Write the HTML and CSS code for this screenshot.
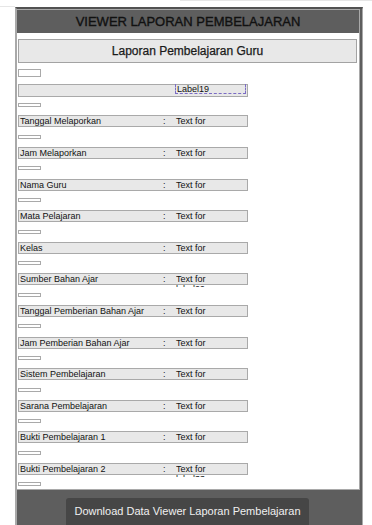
FILE: index.html
```html
<!DOCTYPE html>
<html>
<head>
<meta charset="utf-8">
<link rel="stylesheet" href="styles.css">
</head>
<body>
<div class="topline"></div>
<div class="stage">
  <div class="stub"></div>
  <div class="frame">
    <div class="header">VIEWER LAPORAN PEMBELAJARAN</div>
    <div class="content">
      <div class="title">Laporan Pembelajaran Guru</div>
      <div class="spacer big"></div>
      <div class="labelrow"><span class="label19">Label19</span></div>
      <div class="spacer first"></div>

      <div class="row"><span>Tanggal Melaporkan</span><span>:</span><span class="val">Text for</span></div>
      <div class="spacer"></div>
      <div class="row"><span>Jam Melaporkan</span><span>:</span><span class="val">Text for</span></div>
      <div class="spacer"></div>
      <div class="row"><span>Nama Guru</span><span>:</span><span class="val">Text for</span></div>
      <div class="spacer"></div>
      <div class="row"><span>Mata Pelajaran</span><span>:</span><span class="val">Text for</span></div>
      <div class="spacer"></div>
      <div class="row"><span>Kelas</span><span>:</span><span class="val">Text for</span></div>
      <div class="spacer"></div>
      <div class="row"><span>Sumber Bahan Ajar</span><span>:</span><span class="val wrap">Text for label29</span></div>
      <div class="spacer"></div>
      <div class="row"><span>Tanggal Pemberian Bahan Ajar</span><span>:</span><span class="val">Text for</span></div>
      <div class="spacer"></div>
      <div class="row"><span>Jam Pemberian Bahan Ajar</span><span>:</span><span class="val">Text for</span></div>
      <div class="spacer"></div>
      <div class="row"><span>Sistem Pembelajaran</span><span>:</span><span class="val">Text for</span></div>
      <div class="spacer"></div>
      <div class="row"><span>Sarana Pembelajaran</span><span>:</span><span class="val">Text for</span></div>
      <div class="spacer"></div>
      <div class="row"><span>Bukti Pembelajaran 1</span><span>:</span><span class="val">Text for</span></div>
      <div class="spacer"></div>
      <div class="row"><span>Bukti Pembelajaran 2</span><span>:</span><span class="val wrap">Text for label33</span></div>
      <div class="spacer last"></div>
    </div>
    <div class="footer">
      <div class="button">Download Data Viewer Laporan Pembelajaran</div>
    </div>
  </div>
</div>
</body>
</html>
```

FILE: styles.css
```css
* { box-sizing: border-box; }

body {
  margin: 0;
  background: #ffffff;
  font-family: "Liberation Sans", Arial, sans-serif;
  overflow: hidden;
}

.topline {
  height: 1px;
  margin-left: 180px;
  background: #e6e6e6;
}

.stage {
  display: flex;
  align-items: flex-start;
  padding-top: 5px;
}

.stub {
  flex: none;
  width: 15px;
  height: 1px;
  background: #e6e6e6;
}

.frame {
  flex: none;
  margin-top: 1px;
  width: 348px;
  background: #5e5e5e;
  border-top: 2px solid #525252;
  border-left: 2px solid #a9a9a9;
  border-right: 1px solid #a9a9a9;
  padding-right: 2px;
}

.header {
  height: 24px;
  border-top: 1px solid #a9a9a9;
  border-right: 1px solid #a9a9a9;
  text-align: center;
  font-size: 13px;
  line-height: 23px;
  color: #111111;
  -webkit-text-stroke: 0.35px #111111;
}

.content {
  display: flex;
  flex-direction: column;
  align-items: flex-start;
  background: #ffffff;
  border-right: 1px solid #a9a9a9;
  border-bottom: 1px solid #a9a9a9;
  padding: 6px 2px 2.5px 1px;
}

.title {
  align-self: stretch;
  height: 24px;
  margin-bottom: 6px;
  background: #e8e8e8;
  border: 1px solid #a3a3a3;
  text-align: center;
  font-size: 12px;
  line-height: 22px;
  color: #1a1a1a;
  -webkit-text-stroke: 0.25px #1a1a1a;
}

.spacer {
  width: 23px;
  height: 4px;
  margin-bottom: 8.1px;
  background: #ffffff;
  border: 1px solid #a9a9a9;
}

.spacer.big {
  height: 8px;
  margin-bottom: 7px;
}

.spacer.last {
  margin-bottom: 0;
}

.labelrow {
  width: 230px;
  height: 13px;
  margin-bottom: 6.3px;
  background: #e8e8e8;
  border: 1px solid #a9a9a9;
  padding-left: 156px;
}

.label19 {
  display: block;
  width: 71px;
  height: 10px;
  margin-top: -1px;
  padding-left: 1px;
  border: 1px dashed #7b6cc4;
  border-top: none;
  font-size: 9px;
  line-height: 10px;
  color: #111111;
}

.row {
  display: grid;
  grid-template-columns: 143px 13px 1fr;
  align-items: start;
  width: 230px;
  height: 12px;
  margin-bottom: 7.5px;
  padding-left: 1px;
  background: #e8e8e8;
  border: 1px solid #a9a9a9;
  font-size: 9px;
  line-height: 10.5px;
  color: #111111;
  white-space: nowrap;
}

.val.wrap {
  width: 36px;
  height: 13px;
  line-height: 10px;
  white-space: normal;
  overflow: hidden;
}

.footer {
  height: 40px;
  padding-top: 8px;
}

.button {
  width: 243px;
  height: 30px;
  margin-left: 49px;
  padding-top: 5px;
  background: #464646;
  border-radius: 3px;
  text-align: center;
  font-size: 11px;
  line-height: 16px;
  color: #f0f0f0;
}
```
